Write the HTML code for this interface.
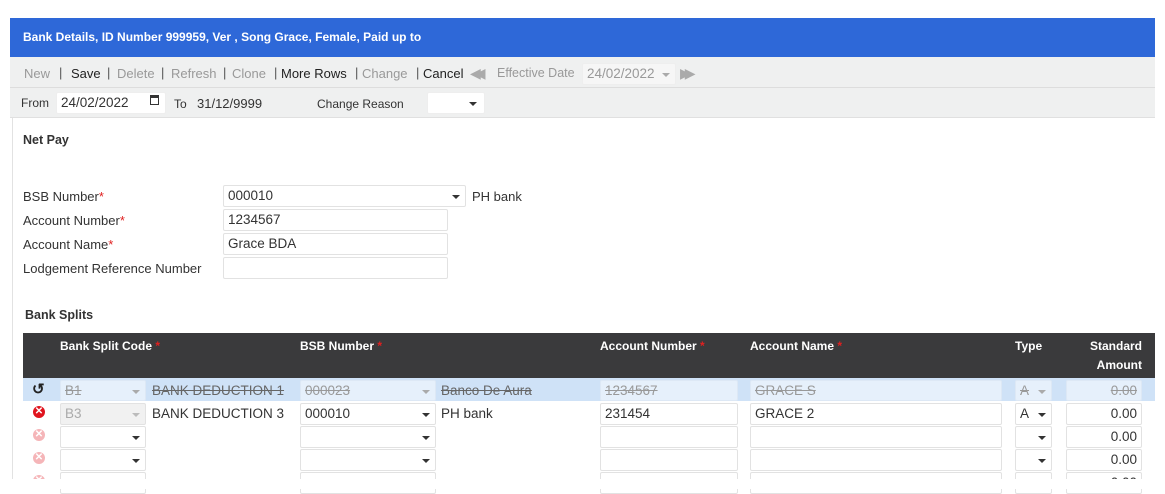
<!DOCTYPE html><html><head><style>
body{margin:0;width:1165px;height:489px;background:#fff;font-family:"Liberation Sans",Arial,sans-serif;position:relative;overflow:hidden;font-size:13px;color:#333}
.a{position:absolute;white-space:nowrap}
.inp{position:absolute;background:#fff;border:1px solid #e2e2e2;border-radius:2px;box-sizing:border-box;height:22px;line-height:20px;padding-left:4px;font-size:13.5px;color:#333}
.car{position:absolute;right:5px;top:9px;width:0;height:0;border-left:4px solid transparent;border-right:4px solid transparent;border-top:4px solid #333}
.dis{background:#f1f1f1;color:#aaa}
.dis .car{border-top-color:#bbb}
.ghost{background:#e6f0fb;color:#999;text-decoration:line-through}
.ghost .car{border-top-color:#aaa}
.tb{color:#999;font-size:13px;top:66px}
.tk{color:#222}
.sp{color:#555;top:65px}
.h{color:#fff;font-weight:bold;font-size:12px}
.req{color:#e02020}
.x{position:absolute;width:12px;height:12px;border-radius:50%;color:#fff;font-size:10px;line-height:12px;text-align:center;font-weight:bold}
</style></head><body>
<div class="a" style="left:10px;top:18px;width:1145px;height:39px;background:#2e68d8"></div>
<div class="a" style="left:23px;top:30px;color:#fff;font-weight:bold;font-size:12px">Bank Details, ID Number 999959, Ver , Song Grace, Female, Paid up to</div>
<div class="a" style="left:10px;top:57px;width:1145px;height:31px;background:#eff0f0;border-bottom:1px solid #ddd;box-sizing:border-box"></div>
<div class="a" style="left:10px;top:88px;width:1145px;height:30px;background:#eff0f0;border-bottom:1px solid #e0e0e0;box-sizing:border-box"></div>
<div class="a" style="left:12px;top:118px;width:1px;height:361px;background:#e2e2e2"></div>
<div class="a tb" style="left:24px">New</div><div class="a sp" style="left:59px">|</div>
<div class="a tb tk" style="left:71px">Save</div><div class="a sp" style="left:107px">|</div>
<div class="a tb" style="left:117px">Delete</div><div class="a sp" style="left:161px">|</div>
<div class="a tb" style="left:171px">Refresh</div><div class="a sp" style="left:223px">|</div>
<div class="a tb" style="left:232px">Clone</div><div class="a sp" style="left:274px">|</div>
<div class="a tb tk" style="left:281px">More Rows</div><div class="a sp" style="left:355px">|</div>
<div class="a tb" style="left:362px">Change</div><div class="a sp" style="left:416px">|</div>
<div class="a tb tk" style="left:423px">Cancel</div>
<div class="a" style="left:470px;top:65px;color:#aaa;font-size:14px;letter-spacing:-6px">◀◀</div>
<div class="a tb" style="left:497px;font-size:12.5px">Effective Date</div>
<div class="inp" style="left:582px;top:63px;width:94px;color:#999;border-color:#eee;background:#f6f6f6">24/02/2022<span class="car" style="border-top-color:#aaa"></span></div>
<div class="a" style="left:680px;top:65px;color:#aaa;font-size:14px;letter-spacing:-6px">▶▶</div>
<div class="a" style="left:21px;top:96px;font-size:12px">From</div>
<div class="inp" style="left:56px;top:92px;width:110px;border-color:#eee">24/02/2022</div>
<div class="a" style="left:150px;top:95px;width:9px;height:10px;border:1.5px solid #333;border-top-width:3px;box-sizing:border-box"></div>
<div class="a" style="left:174px;top:97px;font-size:12px">To</div>
<div class="a" style="left:197px;top:96px">31/12/9999</div>
<div class="a" style="left:317px;top:97px;font-size:12px">Change Reason</div>
<div class="inp" style="left:427px;top:92px;width:58px;border-color:#eee"><span class="car" style="right:7px"></span></div>
<div class="a" style="left:23px;top:133px;font-weight:bold;font-size:12.5px">Net Pay</div>
<div class="a" style="left:23px;top:189px">BSB Number<span class="req">*</span></div>
<div class="a" style="left:23px;top:213px">Account Number<span class="req">*</span></div>
<div class="a" style="left:23px;top:237px">Account Name<span class="req">*</span></div>
<div class="a" style="left:23px;top:261px">Lodgement Reference Number</div>
<div class="inp" style="left:223px;top:185px;width:243px">000010<span class="car"></span></div>
<div class="a" style="left:472px;top:189px">PH bank</div>
<div class="inp" style="left:223px;top:209px;width:225px">1234567</div>
<div class="inp" style="left:223px;top:233px;width:225px">Grace BDA</div>
<div class="inp" style="left:223px;top:257px;width:225px"></div>
<div class="a" style="left:25px;top:308px;font-weight:bold;font-size:12.5px">Bank Splits</div>
<div class="a" style="left:23px;top:333px;width:1132px;height:45px;background:#3a3a3c"></div>
<div class="a h" style="left:60px;top:339px">Bank Split Code<span class="req"> *</span></div>
<div class="a h" style="left:300px;top:339px">BSB Number<span class="req"> *</span></div>
<div class="a h" style="left:600px;top:339px">Account Number<span class="req"> *</span></div>
<div class="a h" style="left:750px;top:339px">Account Name<span class="req"> *</span></div>
<div class="a h" style="left:1015px;top:339px">Type</div>
<div class="a h" style="left:1080px;top:337px;width:62px;text-align:right;line-height:19px">Standard<br>Amount</div>
<div class="a" style="left:23px;top:378px;width:1132px;height:23px;background:#cfe2f7"></div>
<div class="a" style="left:32px;top:380px;font-size:15px;font-weight:bold;color:#222">↺</div>
<div class="inp ghost" style="left:60px;top:380px;width:86px;height:21px;border-color:#dde8f5">B1<span class="car"></span></div>
<div class="a" style="left:152px;top:383px;color:#666;text-decoration:line-through;font-size:13.5px">BANK DEDUCTION 1</div>
<div class="inp ghost" style="left:300px;top:380px;width:136px;height:21px;border-color:#dde8f5">000023<span class="car"></span></div>
<div class="a" style="left:441px;top:383px;color:#666;text-decoration:line-through;font-size:13.5px">Banco De Aura</div>
<div class="inp ghost" style="left:600px;top:380px;width:138px;height:21px;border-color:#dde8f5">1234567</div>
<div class="inp ghost" style="left:750px;top:380px;width:252px;height:21px;border-color:#dde8f5">GRACE S</div>
<div class="inp ghost" style="left:1015px;top:380px;width:37px;height:21px;border-color:#dde8f5">A<span class="car"></span></div>
<div class="inp ghost" style="left:1066px;top:380px;width:76px;height:21px;text-align:right;padding-right:4px;border-color:#dde8f5">0.00</div>

<div class="x" style="left:33px;top:406px;background:#e0141e">✕</div>
<div class="inp dis" style="left:60px;top:403px;width:86px">B3<span class="car"></span></div>
<div class="a" style="left:152px;top:406px;font-size:13.5px">BANK DEDUCTION 3</div>
<div class="inp" style="left:300px;top:403px;width:136px">000010<span class="car"></span></div>
<div class="a" style="left:441px;top:406px;font-size:13.5px">PH bank</div>
<div class="inp" style="left:600px;top:403px;width:138px">231454</div>
<div class="inp" style="left:750px;top:403px;width:252px">GRACE 2</div>
<div class="inp" style="left:1015px;top:403px;width:37px">A<span class="car"></span></div>
<div class="inp" style="left:1066px;top:403px;width:76px;text-align:right;padding-right:4px">0.00</div>

<div class="x" style="left:33px;top:429px;background:#f5b5b8">✕</div>
<div class="inp" style="left:60px;top:426px;width:86px"><span class="car"></span></div>
<div class="inp" style="left:300px;top:426px;width:136px"><span class="car"></span></div>
<div class="inp" style="left:600px;top:426px;width:138px"></div>
<div class="inp" style="left:750px;top:426px;width:252px"></div>
<div class="inp" style="left:1015px;top:426px;width:37px"><span class="car"></span></div>
<div class="inp" style="left:1066px;top:426px;width:76px;text-align:right;padding-right:4px">0.00</div>

<div class="x" style="left:33px;top:452px;background:#f5b5b8">✕</div>
<div class="inp" style="left:60px;top:449px;width:86px"><span class="car"></span></div>
<div class="inp" style="left:300px;top:449px;width:136px"><span class="car"></span></div>
<div class="inp" style="left:600px;top:449px;width:138px"></div>
<div class="inp" style="left:750px;top:449px;width:252px"></div>
<div class="inp" style="left:1015px;top:449px;width:37px"><span class="car"></span></div>
<div class="inp" style="left:1066px;top:449px;width:76px;text-align:right;padding-right:4px">0.00</div>

<div class="x" style="left:33px;top:475px;background:#f5b5b8">✕</div>
<div class="inp" style="left:60px;top:472px;width:86px"></div>
<div class="inp" style="left:300px;top:472px;width:136px"></div>
<div class="inp" style="left:600px;top:472px;width:138px"></div>
<div class="inp" style="left:750px;top:472px;width:252px"></div>
<div class="inp" style="left:1015px;top:472px;width:37px"></div>
<div class="inp" style="left:1066px;top:472px;width:76px;text-align:right;padding-right:4px">0.00</div>
<div class="a" style="left:0;top:479px;width:1165px;height:10px;background:#fff"></div>
</body></html>
